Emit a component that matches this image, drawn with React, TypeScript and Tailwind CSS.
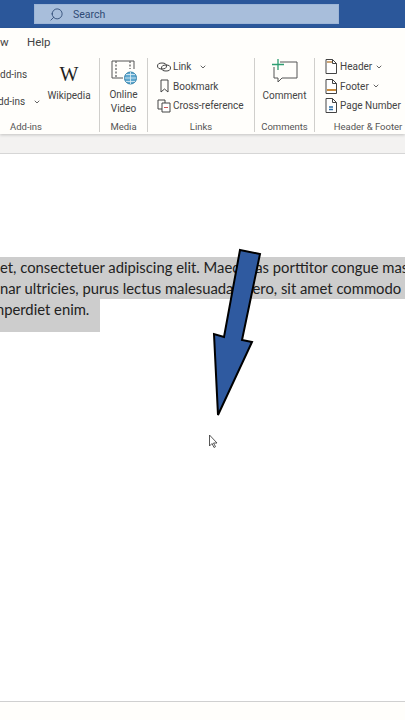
import React from "react";
import { Search, ChevronDown } from "lucide-react";

const Chev = () => <ChevronDown className="w-[8px] h-[8px] text-[#444] shrink-0" strokeWidth={2.5} />;

const Sep = () => <div className="w-[1px] h-[74px] bg-[#d0cfcc] shrink-0" />;

function Group({ w, label, children, cls = "", labelCls = "text-center" }: { w: string; label: string; children: React.ReactNode; cls?: string; labelCls?: string }) {
  return (
    <div className={`flex flex-col shrink-0 h-full ${w}`}>
      <div className={`h-[63px] flex ${cls}`}>{children}</div>
      <div className={`text-[9.5px] leading-[14px] text-[#555] whitespace-nowrap ${labelCls}`}>{label}</div>
    </div>
  );
}

const Row = ({ icon, children }: { icon: React.ReactNode; children: React.ReactNode }) => (
  <div className="h-[19.5px] shrink-0 flex items-center gap-[2px] text-[#444] text-[10px] whitespace-nowrap">
    <span className="w-[14px] h-[15px] shrink-0 flex items-center justify-center">{icon}</span>
    {children}
  </div>
);

const PageIcon = ({ fill }: { fill?: React.ReactNode }) => (
  <svg width="12" height="15" viewBox="0 0 12 15" fill="none" stroke="#444" strokeWidth="1" className="shrink-0">
    <path d="M1 .5h6.500l4 4v10H1z" fill="#fff" />
    <path d="M7.500 .5v4h4" />
    {fill}
  </svg>
);

export default function App() {
  return (
    <div className="relative w-[405px] h-[720px] overflow-hidden bg-white flex flex-col font-['Roboto',sans-serif]">
      <div className="h-[28px] shrink-0 bg-[#2b579a] pl-[34px] pt-[4px]">
        <div className="w-[305px] h-[20px] bg-[#a8bedb] border border-[#9db5d6] flex items-center pl-[14px] gap-[9px] text-[#2f4a75] text-[10.5px]">
          <Search className="w-[15px] h-[15px] -scale-x-100" strokeWidth={1.4} />
          <span className="mt-[1px]">Search</span>
        </div>
      </div>

      <div className="h-[106px] shrink-0 bg-[#fffefb] shadow-[0_1px_3px_rgba(0,0,0,0.2)] z-10 flex flex-col overflow-hidden">
        <div className="h-[29px] shrink-0 flex items-center text-[11.5px] text-[#444]">
          <span className="w-[27px]">w</span>
          <span>Help</span>
        </div>
        <div className="h-[77px] flex items-start pt-[1px]">
          <Group w="w-[99px]" label="Add-ins" labelCls="pl-[10px]" cls="relative">
            <div className="w-[45px] pt-[9px] text-[10px] text-[#444] whitespace-nowrap flex flex-col gap-[12px] overflow-hidden">
              <span>dd-ins</span>
              <span className="flex items-center gap-[8px] -ml-[2px]">dd-ins <Chev /></span>
            </div>
            <div className="w-[48px] flex flex-col items-center text-[10px] text-[#444] pt-[5px]">
              <span className="font-['Liberation_Serif',serif] text-[20px] leading-[22px] text-[#222]">W</span>
              <span className="mt-[3px]">Wikipedia</span>
            </div>
          </Group>
          <Sep />
          <Group w="w-[47px]" label="Media" cls="flex-col items-center">
            <svg width="27" height="27" viewBox="0 0 27 27" fill="none" className="mt-[1px] ml-[1px] shrink-0">
              <path d="M1 2h22v8M1 2v17h11" stroke="#555" />
              <path d="M5 2v17M19 2v8" stroke="#777" strokeDasharray="2 1.500" strokeWidth="1.500" />
              <circle cx="19.500" cy="19" r="6" fill="#5fa8cf" stroke="#2f7ea8" />
              <path d="M13.500 19h12M19.500 13v12M15 15.500h9M15 22.500h9" stroke="#e3f1f8" strokeWidth=".8" />
            </svg>
            <div className="text-center text-[10px] leading-[13.5px] text-[#444] mt-[2px]">Online<br />Video</div>
          </Group>
          <Sep />
          <Group w="w-[106px]" label="Links" cls="flex-col pl-[9px] -mt-[1px]">
            <Row icon={<svg width="14" height="10" viewBox="0 0 14 10" fill="none" stroke="#444"><ellipse cx="5" cy="4" rx="4.500" ry="3" /><ellipse cx="9" cy="6" rx="4.500" ry="3" /></svg>}>
              <span className="mr-[6px]">Link</span><Chev />
            </Row>
            <Row icon={<svg width="9" height="14" viewBox="0 0 9 14" fill="none" stroke="#444"><path d="M1 1h7v12L4.500 10 1 13z" /></svg>}>
              <span>Bookmark</span>
            </Row>
            <Row icon={<svg width="14" height="14" viewBox="0 0 14 14" fill="none" stroke="#444"><path d="M1 1h7v9H1z" /><path d="M5 4h8v9H5z" fill="#fff" /><path d="M7 8.500h4" stroke="#c55" /></svg>}>
              Cross-reference
            </Row>
          </Group>
          <Sep />
          <Group w="w-[59px]" label="Comments" cls="flex-col items-center">
            <svg width="28" height="27" viewBox="0 0 28 27" fill="none" className="mt-[1px] ml-[1px] shrink-0">
              <path d="M9 3h17v16H11l-4 4v-4H3V8" stroke="#555" />
              <path d="M7 0v11M1 5.500h12" stroke="#2e9e72" strokeWidth="1.300" />
            </svg>
            <span className="text-[10px] text-[#444] mt-[2px]">Comment</span>
          </Group>
          <Sep />
          <Group w="w-[95px]" label="Header & Footer" labelCls="text-center pl-[11px]" cls="flex-col pl-[9px] -mt-[1px]">
            <Row icon={<PageIcon fill={<path d="M2 3h5" stroke="#c08a4a" strokeWidth="1.500" />} />}>
              <span className="mr-[1px]">Header</span><Chev />
            </Row>
            <Row icon={<PageIcon fill={<path d="M2 11h9" stroke="#c98a3a" strokeWidth="2" />} />}>
              <span className="mr-[1px]">Footer</span><Chev />
            </Row>
            <Row icon={<PageIcon fill={<path d="M4 9h4M4 11.500h4" stroke="#2b6ea8" strokeWidth="1.500" />} />}>
              <span className="mr-[1px]">Page Number</span><Chev />
            </Row>
          </Group>
        </div>
      </div>

      <div className="h-[20px] shrink-0 bg-[#f3f2f1] border-b border-[#d6d6d6]" />

      <div className="flex-1 bg-white pt-[103px] font-['Lato',sans-serif] text-[14.8px] leading-[21px] text-[#222] whitespace-nowrap overflow-hidden">
        <div className="bg-[#cdcdcd] h-[21px]">et, consectetuer adipiscing elit. Maecenas porttitor congue massa.</div>
        <div className="bg-[#cdcdcd] h-[21px]">nar ultricies, purus lectus malesuada libero, sit amet commodo magna</div>
        <div className="bg-[#cdcdcd] h-[33px] w-[100px] overflow-hidden">
          <span className="block -ml-[8px]">mperdiet enim.</span>
        </div>
      </div>

      <div className="h-[19px] shrink-0 bg-[#fffefb] border-t border-[#d0d0d0]" />

      <svg className="absolute left-[210px] top-[246px]" width="56" height="176" viewBox="0 0 56 176" fill="none">
        <path d="M30 4 L50 8 L32 94 L42 96 L8 169 L4 88 L14 91 Z" fill="#2f5aa0" stroke="#000" strokeWidth="2" strokeLinejoin="miter" />
      </svg>
      <svg className="absolute left-[208px] top-[434px]" width="11" height="15" viewBox="0 0 11 15" fill="#fff" stroke="#444" strokeWidth="0.900">
        <path d="M1.500 1v11l2.500-2.500 2 4 1.500-.8-2-3.700h3.500z" />
      </svg>
    </div>
  );
}
